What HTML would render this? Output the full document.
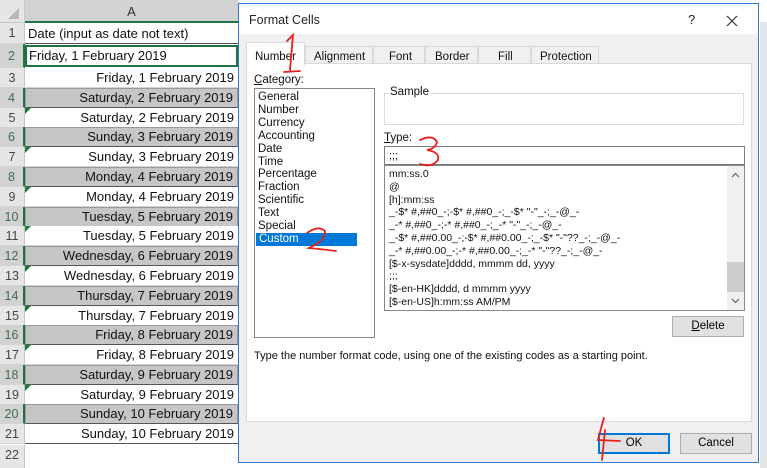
<!DOCTYPE html>
<html><head><meta charset="utf-8"><style>
*{margin:0;padding:0;box-sizing:border-box}
body{width:767px;height:468px;overflow:hidden;background:#fff;font-family:"Liberation Sans",sans-serif;position:relative}
.a{position:absolute}
.hdr{background:#e6e6e6;color:#333;font-size:13px;text-align:center}
.rh{position:absolute;left:0;width:25px;height:20px;line-height:20px;background:#e6e6e6;color:#444;font-size:12.5px;text-align:center;border-bottom:1px solid #d4d4d4;border-right:1px solid #c6c6c6}
.rh.s{background:#d2d2d2;color:#3c6e4c;border-right:2px solid #217346}
.c{position:absolute;left:25px;width:213px;height:20px;line-height:20px;font-size:13px;text-align:right;padding-right:4px;border-bottom:1px solid #d4d4d4;color:#111;background:#fff}
.c.s{background:#c6c6c6;border:1px solid #999;border-bottom:1.5px solid #555;line-height:18px}
.tri{position:absolute;left:0;top:0;width:0;height:0;border-top:6px solid #1e7b34;border-right:6px solid transparent}
.dlg{left:238px;top:3px;width:521px;height:460px;background:#f0f0f0;border:1px solid #2b79d0}
.d{font-size:11.5px;color:#111}
.btn{background:#e1e1e1;border:1px solid #adadad;text-align:center;font-size:11.5px}
.li{font-size:11.5px;line-height:12.9px;padding-left:3px;color:#111}
.ti{font-size:10.5px;line-height:12.8px;color:#111;padding-left:4px;white-space:nowrap}
</style></head><body>
<div class="a hdr" style="left:0;top:0;width:25px;height:23px;border-right:1px solid #c6c6c6;border-bottom:1px solid #c6c6c6"><svg width="25" height="23"><polygon points="19,8 19,19 8,19" fill="#b8b8b8"/></svg></div>
<div class="a hdr" style="left:25px;top:0;width:213px;height:23px;line-height:23px;background:#d2d2d2;border-bottom:2px solid #217346">A</div>
<div class="a" style="left:0;top:445px;width:25px;height:23px;background:#e6e6e6;border-right:1px solid #c6c6c6;font-size:12.5px;color:#444;text-align:center;line-height:20px">22</div>

<div class="rh" style="top:23px;height:21px;line-height:21px">1</div>
<div class="c" style="top:23px;height:21px;line-height:21px;text-align:left;padding-left:3px;border-bottom:1.5px solid #555">Date (input as date not text)</div>
<div class="rh s" style="top:44px;height:24px;line-height:24px">2</div>
<div class="c" style="top:45px;height:22px;line-height:18px;text-align:left;padding-left:2px;border:2px solid #217346">Friday, 1 February 2019</div>

<div class="rh" style="top:68px">3</div><div class="c" style="top:68px">Friday, 1 February 2019</div>
<div class="rh s" style="top:88px">4</div><div class="c s" style="top:88px">Saturday, 2 February 2019</div>
<div class="rh" style="top:108px">5</div><div class="c" style="top:108px"><span class="tri"></span>Saturday, 2 February 2019</div>
<div class="rh s" style="top:127px">6</div><div class="c s" style="top:127px">Sunday, 3 February 2019</div>
<div class="rh" style="top:147px">7</div><div class="c" style="top:147px"><span class="tri"></span>Sunday, 3 February 2019</div>
<div class="rh s" style="top:167px">8</div><div class="c s" style="top:167px">Monday, 4 February 2019</div>
<div class="rh" style="top:187px">9</div><div class="c" style="top:187px"><span class="tri"></span>Monday, 4 February 2019</div>
<div class="rh s" style="top:207px">10</div><div class="c s" style="top:207px">Tuesday, 5 February 2019</div>
<div class="rh" style="top:226px">11</div><div class="c" style="top:226px"><span class="tri"></span>Tuesday, 5 February 2019</div>
<div class="rh s" style="top:246px">12</div><div class="c s" style="top:246px">Wednesday, 6 February 2019</div>
<div class="rh" style="top:266px">13</div><div class="c" style="top:266px"><span class="tri"></span>Wednesday, 6 February 2019</div>
<div class="rh s" style="top:286px">14</div><div class="c s" style="top:286px">Thursday, 7 February 2019</div>
<div class="rh" style="top:306px">15</div><div class="c" style="top:306px"><span class="tri"></span>Thursday, 7 February 2019</div>
<div class="rh s" style="top:325px">16</div><div class="c s" style="top:325px">Friday, 8 February 2019</div>
<div class="rh" style="top:345px">17</div><div class="c" style="top:345px"><span class="tri"></span>Friday, 8 February 2019</div>
<div class="rh s" style="top:365px">18</div><div class="c s" style="top:365px">Saturday, 9 February 2019</div>
<div class="rh" style="top:385px">19</div><div class="c" style="top:385px"><span class="tri"></span>Saturday, 9 February 2019</div>
<div class="rh s" style="top:404px">20</div><div class="c s" style="top:404px">Sunday, 10 February 2019</div>
<div class="rh" style="top:424px">21</div><div class="c" style="top:424px;border-bottom:1.5px solid #555">Sunday, 10 February 2019</div>

<div class="a dlg">
 <div class="a" style="left:0;top:0;width:519px;height:30px;background:#fff"></div>
 <div class="a" style="left:10px;top:9px;font-size:12.5px;color:#222">Format Cells</div>
 <div class="a" style="left:449px;top:8px;font-size:13px;color:#222">?</div>
 <svg class="a" style="left:487px;top:11px" width="12" height="12"><path d="M1 1L11 11M11 1L1 11" stroke="#333" stroke-width="1.2"/></svg>
 <div class="a" style="left:7px;top:59px;width:506px;height:359px;background:#fff;border:1px solid #d9d9d9"></div>
 <div class="a d" style="left:7px;top:38px;width:59px;height:23px;background:#fff;border:1px solid #d9d9d9;border-bottom:none;padding:8px 0 0 8px">Number</div>
 <div class="a d" style="left:66px;top:42px;width:68px;height:18px;border:1px solid #d9d9d9;border-bottom:none;padding:4px 0 0 8px">Alignment</div>
 <div class="a d" style="left:134px;top:42px;width:52px;height:18px;border:1px solid #d9d9d9;border-bottom:none;padding:4px 0 0 15px">Font</div>
 <div class="a d" style="left:186px;top:42px;width:53px;height:18px;border:1px solid #d9d9d9;border-bottom:none;padding:4px 0 0 9px">Border</div>
 <div class="a d" style="left:239px;top:42px;width:53px;height:18px;border:1px solid #d9d9d9;border-bottom:none;padding:4px 0 0 19px">Fill</div>
 <div class="a d" style="left:292px;top:42px;width:68px;height:18px;border:1px solid #d9d9d9;border-bottom:none;padding:4px 0 0 8px">Protection</div>
 <div class="a d" style="left:15px;top:70px"><u>C</u>ategory:</div>
 <div class="a" style="left:15px;top:84px;width:121px;height:250px;border:1px solid #828790;background:#fff;padding-top:2px">
  <div class="li">General</div><div class="li">Number</div><div class="li">Currency</div><div class="li">Accounting</div><div class="li">Date</div><div class="li">Time</div><div class="li">Percentage</div><div class="li">Fraction</div><div class="li">Scientific</div><div class="li">Text</div><div class="li">Special</div>
  <div class="li" style="background:#0078d7;color:#fff;width:101px;margin-left:1px">Custom</div>
 </div>
 <div class="a" style="left:145px;top:89px;width:360px;height:32px;border:1px solid #dcdcdc"></div>
 <div class="a d" style="left:149px;top:82px;background:#fff;padding:0 2px">Sample</div>
 <div class="a d" style="left:145px;top:128px"><u>T</u>ype:</div>
 <div class="a" style="left:145px;top:142px;width:361px;height:19px;border:1px solid #7a7a7a;background:#fff;font-size:11px;padding:3px 4px">;;;</div>
 <div class="a" style="left:145px;top:161px;width:361px;height:146px;border:1px solid #828790;background:#fff;padding-top:2px;overflow:hidden">
  <div class="ti">mm:ss.0</div><div class="ti">@</div><div class="ti">[h]:mm:ss</div>
  <div class="ti">_-$* #,##0_-;-$* #,##0_-;_-$* "-"_-;_-@_-</div>
  <div class="ti">_-* #,##0_-;-* #,##0_-;_-* "-"_-;_-@_-</div>
  <div class="ti">_-$* #,##0.00_-;-$* #,##0.00_-;_-$* "-"??_-;_-@_-</div>
  <div class="ti">_-* #,##0.00_-;-* #,##0.00_-;_-* "-"??_-;_-@_-</div>
  <div class="ti">[$-x-sysdate]dddd, mmmm dd, yyyy</div>
  <div class="ti">;;;</div>
  <div class="ti">[$-en-HK]dddd, d mmmm yyyy</div>
  <div class="ti">[$-en-US]h:mm:ss AM/PM</div>
  <div class="a" style="left:342px;top:0;width:17px;height:144px;background:#f0f0f0"></div>
  <div class="a" style="left:342px;top:96px;width:17px;height:30px;background:#cdcdcd"></div>
  <svg class="a" style="left:346px;top:6px" width="9" height="6"><path d="M1 5L4.5 1.5L8 5" stroke="#555" fill="none"/></svg>
  <svg class="a" style="left:346px;top:132px" width="9" height="6"><path d="M1 1L4.5 4.5L8 1" stroke="#555" fill="none"/></svg>
 </div>
 <div class="a btn" style="left:433px;top:312px;width:72px;height:21px;line-height:19px"><u>D</u>elete</div>
 <div class="a d" style="left:15px;top:346px;font-size:11px">Type the number format code, using one of the existing codes as a starting point.</div>
 <div class="a btn" style="left:359px;top:429px;width:72px;height:21px;line-height:17px;border:2px solid #0078d7">OK</div>
 <div class="a btn" style="left:441px;top:429px;width:72px;height:21px;line-height:19px">Cancel</div>
</div>
<div class="a" style="left:760px;top:22px;width:7px;height:446px;background:#e6e6e6"></div>
<svg class="a" style="left:0;top:0" width="767" height="468" fill="none" stroke="#e8201c" stroke-width="1.8" stroke-linecap="round">
<path d="M287 41 L293 35 L290 70 M284 72 L300 71"/>
<path d="M307 233 Q318 225 325 231 Q326 240 309 248 Q320 249 336 251"/>
<path d="M420 140 Q433 134 437 142 Q435 149 427 150 Q440 152 438 160 Q432 168 420 164"/>
<path d="M604 418 Q600 432 598 440 L620 441 M605 430 L602 460"/>
</svg>
</body></html>
